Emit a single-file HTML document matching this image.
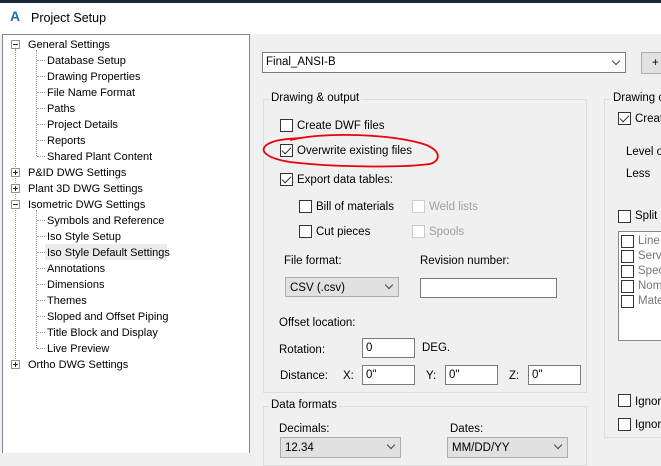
<!DOCTYPE html>
<html><head><style>
*{margin:0;padding:0;box-sizing:border-box}
body{width:661px;height:453px;overflow:hidden;background:#f0f0f0;font-family:"Liberation Sans",sans-serif;font-size:11.5px;color:#000;position:relative}
.a{position:absolute;white-space:nowrap}
.cb{position:absolute;width:13px;height:13px;border:1px solid #333;background:#fff}
.cb.d{border-color:#ccc}
.ck:after{content:"";position:absolute;left:3px;top:0px;width:4px;height:8px;border:solid #333;border-width:0 1.5px 1.5px 0;transform:rotate(45deg)}
.tb{position:absolute;background:#fff;border:1px solid #7a7a7a;height:20px;padding:3px 3px 0;white-space:nowrap}
.grp{position:absolute;border:1px solid #dcdcdc}
.gl{position:absolute;background:#f0f0f0;padding:0 2px;top:-8px;left:5px;white-space:nowrap}
.dd{position:absolute;background:#e1e1e1;border:1px solid #adadad;height:21px;padding:4px 4px 0;white-space:nowrap}
.chev{position:absolute;right:6px;top:4px;width:6px;height:6px;border:solid #444;border-width:0 1px 1px 0;transform:rotate(45deg)}
.t{position:absolute;white-space:nowrap;margin-top:2px}
.pm{position:absolute;width:9px;height:9px;border:1px solid #919191;background:#fff}
.pm:before{content:"";position:absolute;left:1px;top:3px;width:5px;height:1px;background:#222}
.pm.p:after{content:"";position:absolute;left:3px;top:1px;width:1px;height:5px;background:#222}
.dv{position:absolute;border-left:1px dotted #999;width:0}
.dh{position:absolute;border-top:1px dotted #999;height:0}
.g{color:#a0a0a0}
.tree{font-size:11px}
</style></head><body>
<div class="a" style="left:0;top:0;width:661px;height:3px;background:#1b2838"></div>
<div class="a" style="left:0;top:3px;width:661px;height:31px;background:#fff"></div>
<div class="a" style="left:10px;top:8px;font-weight:bold;color:#1f6fb2;font-size:14px">A</div>
<div class="a" style="left:31px;top:11px;font-size:12.5px">Project Setup</div>

<div class="a" style="left:2px;top:34px;width:248px;height:419px;background:#fff;border:1px solid #828790;border-bottom:none"></div>
<div class="tree">
<div class="dv" style="left:15px;top:49px;height:316px"></div>
<div class="dv" style="left:36px;top:50px;height:106px"></div>
<div class="dv" style="left:36px;top:210px;height:138px"></div>
<div class="pm" style="left:11px;top:40px"></div>
<div class="pm p" style="left:11px;top:168px"></div>
<div class="pm p" style="left:11px;top:184px"></div>
<div class="pm" style="left:11px;top:200px"></div>
<div class="pm p" style="left:11px;top:360px"></div>
<div class="t" style="left:28px;top:37px">General Settings</div>
<div class="t" style="left:28px;top:165px">P&amp;ID DWG Settings</div>
<div class="t" style="left:28px;top:181px">Plant 3D DWG Settings</div>
<div class="t" style="left:28px;top:197px">Isometric DWG Settings</div>
<div class="t" style="left:28px;top:357px">Ortho DWG Settings</div>
<div class="a" style="left:45px;top:244px;width:122px;height:16px;background:#ececec"></div>
<div style="position:absolute;left:37px;top:0">
<div class="dh" style="left:0;top:60px;width:8px"></div>
<div class="dh" style="left:0;top:76px;width:8px"></div>
<div class="dh" style="left:0;top:92px;width:8px"></div>
<div class="dh" style="left:0;top:108px;width:8px"></div>
<div class="dh" style="left:0;top:124px;width:8px"></div>
<div class="dh" style="left:0;top:140px;width:8px"></div>
<div class="dh" style="left:0;top:156px;width:8px"></div>
<div class="dh" style="left:0;top:220px;width:8px"></div>
<div class="dh" style="left:0;top:236px;width:8px"></div>
<div class="dh" style="left:0;top:252px;width:8px"></div>
<div class="dh" style="left:0;top:268px;width:8px"></div>
<div class="dh" style="left:0;top:284px;width:8px"></div>
<div class="dh" style="left:0;top:300px;width:8px"></div>
<div class="dh" style="left:0;top:316px;width:8px"></div>
<div class="dh" style="left:0;top:332px;width:8px"></div>
<div class="dh" style="left:0;top:348px;width:8px"></div>
</div>
<div style="position:absolute;left:47px;top:0">
<div class="t" style="top:53px">Database Setup</div>
<div class="t" style="top:69px">Drawing Properties</div>
<div class="t" style="top:85px">File Name Format</div>
<div class="t" style="top:101px">Paths</div>
<div class="t" style="top:117px">Project Details</div>
<div class="t" style="top:133px">Reports</div>
<div class="t" style="top:149px">Shared Plant Content</div>
<div class="t" style="top:213px">Symbols and Reference</div>
<div class="t" style="top:229px">Iso Style Setup</div>
<div class="t" style="top:245px">Iso Style Default Settings</div>
<div class="t" style="top:261px">Annotations</div>
<div class="t" style="top:277px">Dimensions</div>
<div class="t" style="top:293px">Themes</div>
<div class="t" style="top:309px">Sloped and Offset Piping</div>
<div class="t" style="top:325px">Title Block and Display</div>
<div class="t" style="top:341px">Live Preview</div>
</div>
</div>

<div class="tb" style="left:262px;top:52px;width:364px;height:21px;border-color:#7a7a7a">Final_ANSI-B<span class="chev" style="top:5px"></span></div>
<div class="a" style="left:641px;top:52px;width:30px;height:22px;background:#e1e1e1;border:1px solid #adadad;padding:4px 0 0 10px">+</div>

<div class="grp" style="left:263px;top:99px;width:324px;height:294px"><span class="gl">Drawing &amp; output</span></div>
<div class="cb" style="left:280px;top:119px"></div><div class="t" style="left:297px;top:118px">Create DWF files</div>
<div class="cb ck" style="left:280px;top:144px"></div><div class="t" style="left:297px;top:143px">Overwrite existing files</div>
<div class="cb ck" style="left:280px;top:173px"></div><div class="t" style="left:297px;top:172px">Export data tables:</div>
<div class="cb" style="left:299px;top:200px"></div><div class="t" style="left:316px;top:199px">Bill of materials</div>
<div class="cb d" style="left:412px;top:200px"></div><div class="t g" style="left:429px;top:199px">Weld lists</div>
<div class="cb" style="left:299px;top:225px"></div><div class="t" style="left:316px;top:224px">Cut pieces</div>
<div class="cb d" style="left:412px;top:225px"></div><div class="t g" style="left:429px;top:224px">Spools</div>
<div class="t" style="left:284px;top:253px">File format:</div>
<div class="t" style="left:420px;top:253px">Revision number:</div>
<div class="dd" style="left:285px;top:277px;width:114px;height:20px">CSV (.csv)<span class="chev"></span></div>
<div class="tb" style="left:420px;top:278px;width:137px"></div>
<div class="t" style="left:279px;top:315px">Offset location:</div>
<div class="t" style="left:279px;top:342px">Rotation:</div>
<div class="tb" style="left:362px;top:338px;width:53px">0</div>
<div class="t" style="left:422px;top:340px">DEG.</div>
<div class="t" style="left:280px;top:368px">Distance:</div>
<div class="t" style="left:343px;top:368px">X:</div>
<div class="tb" style="left:362px;top:365px;width:53px">0"</div>
<div class="t" style="left:426px;top:368px">Y:</div>
<div class="tb" style="left:445px;top:365px;width:53px">0"</div>
<div class="t" style="left:509px;top:368px">Z:</div>
<div class="tb" style="left:528px;top:365px;width:53px">0"</div>

<div class="grp" style="left:263px;top:406px;width:324px;height:60px"><span class="gl">Data formats</span></div>
<div class="t" style="left:279px;top:421px">Decimals:</div>
<div class="t" style="left:450px;top:421px">Dates:</div>
<div class="dd" style="left:280px;top:437px;width:121px">12.34<span class="chev"></span></div>
<div class="dd" style="left:447px;top:437px;width:121px">MM/DD/YY<span class="chev"></span></div>

<div class="grp" style="left:604px;top:99px;width:70px;height:339px"><span class="gl" style="left:6px;width:80px">Drawing co</span></div>
<div class="cb ck" style="left:618px;top:112px"></div><div class="t" style="left:635px;top:111px">Create</div>
<div class="t" style="left:626px;top:144px">Level o</div>
<div class="t" style="left:626px;top:166px">Less</div>
<div class="cb" style="left:618px;top:210px"></div><div class="t" style="left:635px;top:208px">Split</div>
<div class="a" style="left:618px;top:231px;width:50px;height:110px;background:#fff;border:1px solid #828790"></div>
<div class="cb" style="left:621px;top:235px"></div><div class="t" style="left:638px;top:233px;color:#777">Line</div>
<div class="cb" style="left:621px;top:250px"></div><div class="t" style="left:638px;top:248px;color:#777">Serv</div>
<div class="cb" style="left:621px;top:265px"></div><div class="t" style="left:638px;top:263px;color:#777">Spec</div>
<div class="cb" style="left:621px;top:280px"></div><div class="t" style="left:638px;top:278px;color:#777">Nom</div>
<div class="cb" style="left:621px;top:295px"></div><div class="t" style="left:638px;top:293px;color:#777">Mate</div>
<div class="cb" style="left:618px;top:394px"></div><div class="t" style="left:635px;top:394px">Ignore</div>
<div class="cb" style="left:618px;top:418px"></div><div class="t" style="left:635px;top:417px">Ignore</div>

<svg class="a" style="left:0;top:0" width="661" height="453"><path d="M290 140 C330 131 390 135 420 143 C440 148 443 160 430 164 C400 168 330 167 290 162 C265 158 258 150 268 144 C275 140 285 139 300 138" fill="none" stroke="#e8000b" stroke-width="1.8"/></svg>
</body></html>
